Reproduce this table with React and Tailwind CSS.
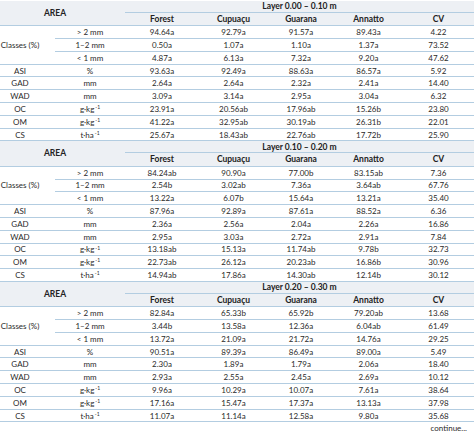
import React from "react";

const blocks = [
  {
    layer: "Layer 0.00 – 0.10 m",
    rows: [
      ["94.64a", "92.79a", "91.57a", "89.43a", "4.22"],
      ["0.50a", "1.07a", "1.10a", "1.37a", "73.52"],
      ["4.87a", "6.13a", "7.32a", "9.20a", "47.62"],
      ["93.63a", "92.49a", "88.63a", "86.57a", "5.92"],
      ["2.64a", "2.64a", "2.32a", "2.41a", "14.40"],
      ["3.09a", "3.14a", "2.95a", "3.04a", "6.32"],
      ["23.91a", "20.56ab", "17.96ab", "15.26b", "23.80"],
      ["41.22a", "32.95ab", "30.19ab", "26.31b", "22.01"],
      ["25.67a", "18.43ab", "22.76ab", "17.72b", "25.90"],
    ],
  },
  {
    layer: "Layer 0.10 – 0.20 m",
    rows: [
      ["84.24ab", "90.90a", "77.00b", "83.15ab", "7.36"],
      ["2.54b", "3.02ab", "7.36a", "3.64ab", "67.76"],
      ["13.22a", "6.07b", "15.64a", "13.21a", "35.40"],
      ["87.96a", "92.89a", "87.61a", "88.52a", "6.36"],
      ["2.36a", "2.56a", "2.04a", "2.26a", "16.86"],
      ["2.95a", "3.03a", "2.72a", "2.91a", "7.84"],
      ["13.18ab", "15.13a", "11.74ab", "9.78b", "32.73"],
      ["22.73ab", "26.12a", "20.23ab", "16.86b", "30.96"],
      ["14.94ab", "17.86a", "14.30ab", "12.14b", "30.12"],
    ],
  },
  {
    layer: "Layer 0.20 – 0.30 m",
    rows: [
      ["82.84a", "65.33b", "65.92b", "79.20ab", "13.68"],
      ["3.44b", "13.58a", "12.36a", "6.04ab", "61.49"],
      ["13.72a", "21.09a", "21.72a", "14.76a", "29.25"],
      ["90.51a", "89.39a", "86.49a", "89.00a", "5.49"],
      ["2.30a", "1.89a", "1.79a", "2.06a", "18.40"],
      ["2.93a", "2.55a", "2.45a", "2.69a", "10.12"],
      ["9.96a", "10.29a", "10.07a", "7.61a", "38.64"],
      ["17.16a", "15.47a", "17.37a", "13.13a", "37.98"],
      ["11.07a", "11.14a", "12.58a", "9.80a", "35.68"],
    ],
  },
];

const Sup = ({ children }) => (
  <span className="ml-[1px] self-start pt-[2px] text-[5px] leading-none">{children}</span>
);

const units = [
  "> 2 mm",
  "1–2 mm",
  "< 1 mm",
  "%",
  "mm",
  "mm",
  <>g·kg<Sup>-1</Sup></>,
  <>g·kg<Sup>-1</Sup></>,
  <>t·ha<Sup>-1</Sup></>,
];
const labels = [null, null, null, "ASI", "GAD", "WAD", "OC", "OM", "CS"];
const heads = ["Forest", "Cupuaçu", "Guarana", "Annatto", "CV"];

const cell = "flex items-center justify-center border-b border-[#b3cde1] leading-none whitespace-nowrap";
const hcell = "flex items-center justify-center bg-[#edf0f4] font-bold text-[8.5px] text-[#222] leading-none whitespace-nowrap";

function Block({ b }) {
  return (
    <div className="grid grid-cols-[70px_70px_74px_69px_66px_69px_71px] grid-rows-[12px_13.3px_repeat(9,12.8px)] text-[8px] text-[#2a2a2a]">
      <div className={`${hcell} col-span-2 row-span-2 border-b border-[#b3cde1]`}>AREA</div>
      <div className={`${hcell} col-span-5 border-b border-[#b3cde1]`}>{b.layer}</div>
      {heads.map((h) => (
        <div key={h} className={`${hcell} border-b border-[#b3cde1]`}>{h}</div>
      ))}
      {b.rows.map((r, i) => (
        <React.Fragment key={i}>
          {i === 0 && <div className={`${cell} row-span-3`}>Classes (%)</div>}
          {i >= 3 && <div className={cell}>{labels[i]}</div>}
          <div className={cell}>
            <span className="flex h-full items-center">{units[i]}</span>
          </div>
          {r.map((v, j) => (
            <div key={j} className={cell}>{v}</div>
          ))}
        </React.Fragment>
      ))}
    </div>
  );
}

export default function App() {
  return (
    <div className="w-[474px] h-[435px] overflow-hidden bg-white" style={{ fontFamily: "Lato, 'Noto Sans', sans-serif" }}>
      <div className="ml-[-15px] w-[489px] pt-[1px]">
        {blocks.map((b, i) => (
          <Block key={i} b={b} />
        ))}
        <div className="flex h-[12px] items-center justify-end pr-[7px] text-[8px] text-[#2a2a2a] leading-none">
          continue...
        </div>
      </div>
    </div>
  );
}
